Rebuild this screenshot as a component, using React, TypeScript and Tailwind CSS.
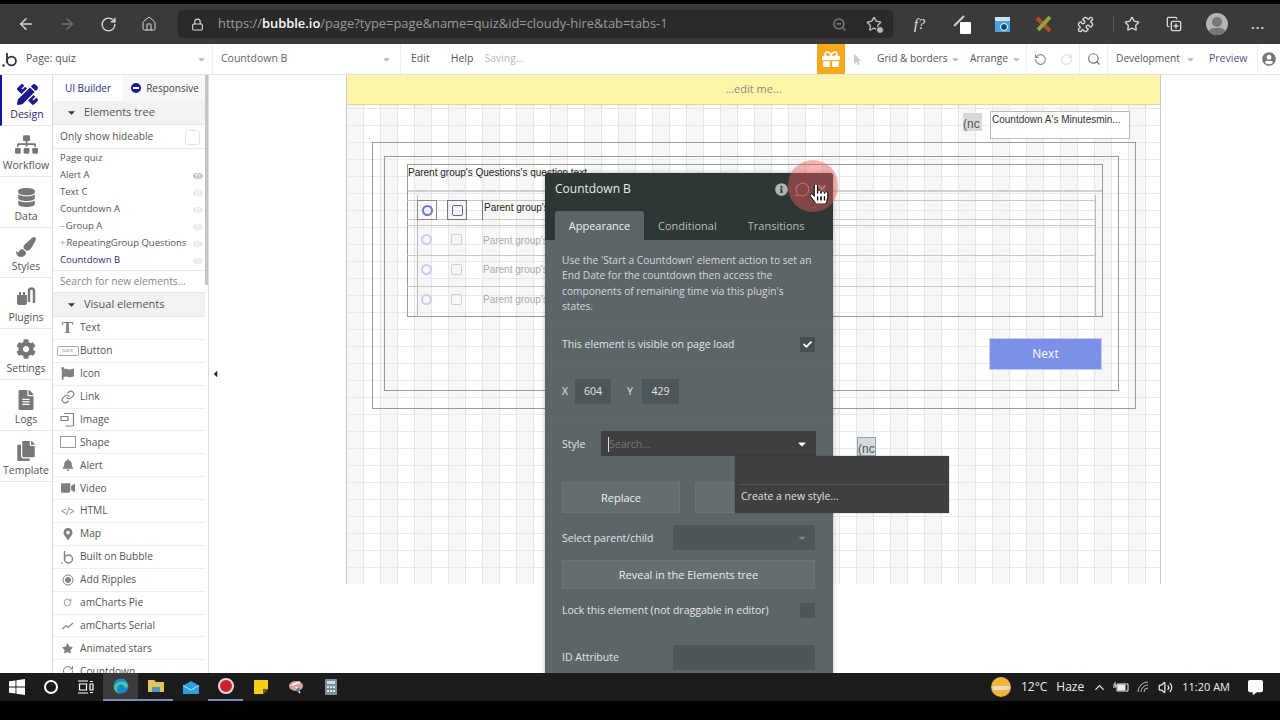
import { ArrowLeft, ArrowRight, RotateCw, RotateCcw, Home, Lock, ZoomOut, Star, Puzzle, CopyPlus, Search, ChevronUp, Volume2, MessageCircle, Link as LinkIcon } from "lucide-react";
import { FaPencilRuler, FaSitemap, FaDatabase, FaPaintBrush, FaCog, FaFileAlt, FaCopy, FaEye, FaBell, FaVideo, FaMapMarkerAlt, FaStar, FaInfoCircle, FaTimes, FaGift, FaUserCircle, FaMousePointer, FaHandPointer, FaCheck, FaCaretDown, FaFlag, FaCommentAlt } from "react-icons/fa";

const railItems = [
  { label: "Design", icon: <FaPencilRuler size={21} className="text-[#1a1a8c]" />, active: true },
  { label: "Workflow", icon: <FaSitemap size={23} className="text-[#777]" /> },
  { label: "Data", icon: <FaDatabase size={19} className="text-[#777]" /> },
  { label: "Styles", icon: <FaPaintBrush size={20} className="text-[#777]" /> },
  {
    label: "Plugins",
    icon: (
      <svg width="22" height="22" viewBox="0 0 22 22" className="text-[#777]">
        <path d="M2 9h10v8a2 2 0 0 1-2 2H4a2 2 0 0 1-2-2z M4 6h2v3H4z M8 6h2v3H8z" fill="currentColor" />
        <path d="M14 16V5a2.5 2.5 0 0 1 5 0v12" fill="none" stroke="currentColor" strokeWidth="2.4" />
      </svg>
    ),
  },
  { label: "Settings", icon: <FaCog size={20} className="text-[#777]" /> },
  { label: "Logs", icon: <FaFileAlt size={20} className="text-[#777]" /> },
  { label: "Template", icon: <FaCopy size={20} className="text-[#777]" /> },
];

const treeRows = [
  { name: "Page quiz" },
  { name: "Alert A", eye: "text-[#bbb]" },
  { name: "Text C", eye: "text-[#e6e6e6]" },
  { name: "Countdown A", eye: "text-[#e6e6e6]" },
  { name: "Group A", eye: "text-[#e6e6e6]", prefix: "–" },
  { name: "RepeatingGroup Questions", eye: "text-[#e6e6e6]", prefix: "+" },
  { name: "Countdown B", eye: "text-[#e6e6e6]", selected: true },
];

const glyph = "w-[25px] flex justify-center text-[#808080]";

const visualRows = [
  { name: "Text", icon: <span className="[font-family:'Liberation_Serif',serif] text-[17px] font-bold text-[#808080] leading-none">T</span> },
  { name: "Button", icon: <span className="w-[22px] h-[10px] border border-[#aaa] rounded-[2px] text-[4px] leading-[8px] text-center text-[#666]">CLICK</span> },
  { name: "Icon", icon: <FaFlag size={13} /> },
  { name: "Link", icon: <LinkIcon size={14} /> },
  {
    name: "Image",
    icon: (
      <svg width="15" height="15" viewBox="0 0 15 15" fill="none" stroke="currentColor" strokeWidth="1.2">
        <path d="M4 1.5h9.5v11a1.5 1.5 0 0 1-1.5 1.500H5.500" />
        <path d="M1 4.500h7v4H1z" />
      </svg>
    ),
  },
  { name: "Shape", icon: <span className="w-[16px] h-[12px] border border-[#999]" /> },
  { name: "Alert", icon: <FaBell size={12} /> },
  { name: "Video", icon: <FaVideo size={14} /> },
  { name: "HTML", icon: <span className="text-[10px] leading-none tracking-[-0.5px]">{"</>"}</span> },
  { name: "Map", icon: <FaMapMarkerAlt size={12} /> },
  {
    name: "Built on Bubble",
    icon: (
      <svg width="13" height="14" viewBox="0 0 13 14" fill="none" stroke="currentColor" strokeWidth="1.4">
        <path d="M3.500 1v8" />
        <circle cx="7.500" cy="9" r="4" />
        <circle cx="1" cy="13" r=".8" fill="currentColor" stroke="none" />
      </svg>
    ),
  },
  {
    name: "Add Ripples",
    icon: (
      <svg width="12" height="12" viewBox="0 0 12 12" fill="none" stroke="currentColor">
        <circle cx="6" cy="6" r="5" />
        <circle cx="6" cy="6" r="2.500" fill="currentColor" />
      </svg>
    ),
  },
  { name: "amCharts Pie", icon: <RotateCw size={9} /> },
  {
    name: "amCharts Serial",
    icon: (
      <svg width="12" height="8" viewBox="0 0 12 8" fill="none" stroke="currentColor" strokeWidth="1.2">
        <path d="M0.500 7 4 3.500l2 2L11 1" />
      </svg>
    ),
  },
  { name: "Animated stars", icon: <FaStar size={11} /> },
  { name: "Countdown", icon: <RotateCw size={12} /> },
];

function Caret({ className }: { className: string }) {
  return <FaCaretDown size={11} className={className} />;
}

function Rail() {
  return (
    <div className="w-[52px] shrink-0 flex flex-col bg-white">
      {railItems.map((item) => (
        <div
          key={item.label}
          className={`h-[50.85px] shrink-0 flex flex-col items-center justify-end pb-[4px] gap-[3px] border-b border-[#e8e8e8] ${item.active ? "border-l-2 border-l-[#1212a8]" : ""}`}
        >
          {item.icon}
          <span className={`text-[10.5px] leading-[13px] ${item.active ? "text-[#2a2a6e]" : "text-[#555]"}`}>{item.label}</span>
        </div>
      ))}
    </div>
  );
}

function SectionHeader({ title }: { title: string }) {
  return (
    <div className="h-[24px] shrink-0 flex items-center bg-[#f2f2f2] pl-[13px] gap-[7px] text-[11px] text-[#555] border-b border-[#e6e6e6]">
      <FaCaretDown size={11} className="text-[#333]" />
      {title}
    </div>
  );
}

function ElementsPanel() {
  return (
    <div className="w-[157px] shrink-0 flex border-x border-[#dcdcdc] h-[598px] overflow-hidden">
      <div className="w-[152px] shrink-0 flex flex-col text-[#555]">
        <div className="h-[26px] shrink-0 flex text-[10px]">
          <div className="w-[70px] flex items-center justify-center text-[#2d2d86] bg-white">UI Builder</div>
          <div className="flex-1 flex items-center justify-center gap-[5px] pl-[2px] bg-[#f7f7f7] text-[#444]">
            <span className="w-[10px] h-[10px] rounded-full bg-[#1a1a8c] flex items-center justify-center">
              <span className="w-[6px] h-[2px] bg-white" />
            </span>
            Responsive
          </div>
        </div>
        <SectionHeader title="Elements tree" />
        <div className="h-[24px] shrink-0 flex items-center justify-between pl-[7px] pr-[5px] pt-[1px] text-[10.2px] border-b border-[#e8e8e8]">
          Only show hideable
          <span className="w-[15px] h-[15px] border border-[#e4e4e4] rounded-[3px]" />
        </div>
        <div className="h-[122px] shrink-0 pt-[1px] pl-[7px] pr-[2px] border-b border-[#e8e8e8]">
          {treeRows.map((row) => (
            <div key={row.name} className="h-[17px] flex items-center justify-between text-[9.5px]">
              <span className={`flex items-center gap-[1px] ${row.selected ? "text-[#2d2d86]" : ""}`}>
                {row.prefix && <span className="text-[#999]">{row.prefix}</span>}
                {row.name}
              </span>
              {row.eye && <FaEye size={10} className={row.eye} />}
            </div>
          ))}
        </div>
        <div className="h-[22px] shrink-0 flex items-center pl-[7px] pt-[1px] text-[10.2px] text-[#888] border-b border-[#e8e8e8]">Search for new elements...</div>
        <SectionHeader title="Visual elements" />
        {visualRows.map((row) => (
          <div key={row.name} className="h-[22.9px] shrink-0 flex items-center pl-[2px] text-[10.2px] border-b border-[#eee]">
            <span className={glyph}>{row.icon}</span>
            {row.name}
          </div>
        ))}
      </div>
      <div className="w-[4px] h-[210px] bg-[#c4c4c4]" />
    </div>
  );
}

function EditorHeader() {
  return (
    <div className="h-[31px] shrink-0 flex items-center bg-white border-b border-[#e4e4e4] text-[10.5px] text-[#555]">
      <div className="w-[213px] shrink-0 h-full flex items-center border-r border-[#eee]">
        <svg width="16" height="18" viewBox="0 0 16 18" fill="none" stroke="#333" strokeWidth="1.8" className="ml-[1px]">
          <path d="M6 3v10" />
          <circle cx="10.500" cy="11" r="4.400" />
          <circle cx="2.500" cy="15.500" r="1.200" fill="#333" stroke="none" />
        </svg>
        <span className="ml-[9px] flex-1">Page: quiz</span>
        <Caret className="mr-[5px] text-[#bbb]" />
      </div>
      <div className="w-[188px] shrink-0 h-full flex items-center justify-between pl-[8px] pr-[8px] border-r border-[#eee]">
        <span className="text-[#666]">Countdown B</span>
        <Caret className="text-[#bbb]" />
      </div>
      <span className="ml-[10px]">Edit</span>
      <span className="ml-[21px]">Help</span>
      <span className="ml-[11px] text-[#bbb]">Saving...</span>
      <div className="ml-auto w-[28px] h-full flex items-center justify-center bg-[#f5a81c]">
        <FaGift size={18} className="text-white" />
      </div>
      <FaMousePointer size={11} className="ml-[7px] text-[#ccc]" />
      <span className="ml-[14px] w-[70px] whitespace-nowrap text-[10.2px]">Grid &amp; borders</span>
      <Caret className="ml-[3px] text-[#bbb]" />
      <span className="ml-[9px] w-[38px] text-[10.2px]">Arrange</span>
      <Caret className="ml-[3px] text-[#bbb]" />
      <div className="ml-[4px] h-full w-[54px] flex items-center justify-around border-x border-[#eee]">
        <RotateCcw size={13} className="text-[#888]" />
        <RotateCw size={13} className="text-[#ddd]" />
      </div>
      <div className="h-full w-[28px] flex items-center justify-center border-r border-[#eee]">
        <Search size={14} className="text-[#777]" />
      </div>
      <span className="ml-[8px] w-[64px] whitespace-nowrap text-[10.2px]">Development</span>
      <Caret className="ml-[5px] text-[#bbb]" />
      <span className="ml-[13px] w-[38px] text-[#50508a]">Preview</span>
      <div className="ml-[10px] h-full w-[23px] flex items-center justify-center border-l border-[#eee]">
        <FaUserCircle size={14} className="text-[#777]" />
      </div>
    </div>
  );
}

function Canvas() {
  const line = "absolute border border-[#9a9a9a]";
  const row = "absolute left-[60px] w-[688px] border-t border-[#c8c8c8]";
  const faded = "absolute text-[10px] text-[#aaa] [font-family:'Liberation_Sans',sans-serif]";
  return (
    <div className="w-[815px] shrink-0 flex flex-col h-[509px] border-x border-[#c9c9c9]">
      <div className="h-[30px] shrink-0 flex items-center justify-center bg-[#fdf6a9] text-[11px] text-[#888] border-b border-[#dfd98f]">...edit me...</div>
      <div className="relative flex-1 bg-white bg-[linear-gradient(to_right,#e6e6e6_1px,transparent_1px),linear-gradient(to_bottom,#e9e9e9_1px,transparent_1px),linear-gradient(to_right,#f7f7f7_17px,transparent_17px)] bg-[size:17px_17px,17px_17px,34px_100%] bg-[position:-1px_3px,-1px_3px,-1px_0]">
        <span className="absolute left-[616px] top-[8px] w-[19px] h-[18px] bg-[#d8d8d8] overflow-hidden text-[12px] leading-[22px] text-[#555] [font-family:'Liberation_Sans',sans-serif]">(nc</span>
        <div className="absolute left-[643px] top-[6px] w-[140px] h-[28px] border border-[#bbb] bg-white pl-[1px] text-[10px] leading-[15px] text-[#333] [font-family:'Liberation_Sans',sans-serif]">Countdown A's Minutesmin...</div>

        <div className={`${line} left-[25px] top-[37px] w-[764px] h-[267px]`} />
        <div className={`${line} left-[37px] top-[51px] w-[735px] h-[235px]`} />
        <div className={`${line} left-[60px] top-[59px] w-[696px] h-[153px]`}>
          <span className="absolute left-[0px] top-[0px] text-[10px] leading-[16px] text-[#222] [font-family:'Liberation_Sans',sans-serif]">Parent group's Questions's question text</span>
        </div>
        <div className="absolute left-[61px] top-[85px] w-[694px] border-t-2 border-[#d0d0d0]" />
        <div className="absolute left-[70px] top-[90px] w-[679px] h-[122px] border-x border-[#bbb]" />
        <div className={`${row} top-[95px] border-[#aaa]`} />
        <div className={`${row} top-[114px] border-[#aaa]`} />
        <div className={`${row} top-[120px]`} />
        <div className={`${row} top-[150px]`} />
        <div className={`${row} top-[181px]`} />

        <div className="absolute left-[70px] top-[95px] w-[20px] h-[20px] border border-[#888] flex items-center justify-center">
          <span className="w-[11px] h-[11px] rounded-full border-2 border-[#6c78c4]" />
        </div>
        <div className="absolute left-[100px] top-[95px] w-[20px] h-[20px] border border-[#777] flex items-center justify-center">
          <span className="w-[11px] h-[11px] rounded-[2px] border border-[#5a66b0]" />
        </div>
        <div className="absolute left-[135px] top-[95px] h-[20px] border-l border-[#777] pl-[1px] text-[10px] leading-[15px] text-[#222] [font-family:'Liberation_Sans',sans-serif]">Parent group's</div>

        <span className="absolute left-[74px] top-[129px] w-[11px] h-[11px] rounded-full border-2 border-[#c9cdea]" />
        <span className="absolute left-[104px] top-[129px] w-[11px] h-[11px] rounded-[2px] border border-[#cfcfcf]" />
        <span className={`${faded} left-[136px] top-[128px]`}>Parent group's</span>
        <span className="absolute left-[74px] top-[159px] w-[11px] h-[11px] rounded-full border-2 border-[#c9cdea]" />
        <span className="absolute left-[104px] top-[159px] w-[11px] h-[11px] rounded-[2px] border border-[#cfcfcf]" />
        <span className={`${faded} left-[136px] top-[157px]`}>Parent group's</span>
        <span className="absolute left-[74px] top-[189px] w-[11px] h-[11px] rounded-full border-2 border-[#c9cdea]" />
        <span className="absolute left-[104px] top-[189px] w-[11px] h-[11px] rounded-[2px] border border-[#cfcfcf]" />
        <span className={`${faded} left-[136px] top-[187px]`}>Parent group's</span>

        <div className="absolute left-[642px] top-[233px] w-[113px] h-[32px] bg-[#7b90e6] flex items-center justify-center text-[12px] text-white border border-[#c5cdf0]">Next</div>
        <span className="absolute left-[510px] top-[332px] w-[19px] h-[19px] bg-[#d8d8d8] border border-[#7fa8c4] overflow-hidden text-[12px] leading-[22px] text-[#555] [font-family:'Liberation_Sans',sans-serif]">(nc</span>
      </div>
    </div>
  );
}

function PropertyPanel() {
  const inputBox = "bg-[#4d5659]";
  const button = "bg-[#646e70] border border-[#6c7678] flex items-center justify-center pt-[1px] text-[#eceeee]";
  return (
    <div className="absolute left-[545px] top-[129px] w-[288px] h-[544px] flex flex-col bg-[#5c6568] rounded-t-[3px] text-[10.5px] text-[#e3e6e6] shadow-[0_0_4px_rgba(0,0,0,0.3)]">
      <div className="h-[32px] shrink-0 flex items-center bg-[#2e3636] rounded-t-[3px] pl-[10px] pr-[5px] text-[12px] text-[#e8e8e8]">
        Countdown B
        <FaInfoCircle size={13} className="ml-auto text-[#aeb4b4]" />
        <MessageCircle size={15} className="ml-[7px] text-[#8f7777]" />
        <FaTimes size={12} className="ml-[6px] text-[#8a8a8a]" />
      </div>
      <div className="h-[35px] shrink-0 flex items-end bg-[#2e3636] pl-[10px] text-[11px]">
        <div className="w-[89px] h-[29px] flex items-center justify-center pt-[1px] bg-[#5c6568] rounded-t-[3px] text-[#f2f2f2]">Appearance</div>
        <div className="ml-[14px] h-[29px] flex items-center pt-[1px] text-[#b8bdbd]">Conditional</div>
        <div className="ml-[31px] h-[29px] flex items-center pt-[1px] text-[#b8bdbd]">Transitions</div>
      </div>
      <div className="h-[86px] shrink-0 pt-[13px] pl-[17px] pr-[19px] text-[10.2px] leading-[15.4px] text-[#d5d9da] border-b border-[#5f686b]">
        Use the 'Start a Countdown' element action to set an End Date for the countdown then access the components of remaining time via this plugin's states.
      </div>
      <div className="h-[40px] shrink-0 flex items-center justify-between pl-[17px] pr-[18px] pb-[2px] border-b border-[#5f686b]">
        This element is visible on page load
        <span className="w-[15px] h-[15px] flex items-center justify-center bg-[#474f51]">
          <FaCheck size={9} className="text-white" />
        </span>
      </div>
      <div className="h-[52px] shrink-0 flex items-center pl-[17px] border-b border-[#5f686b]">
        X
        <span className={`${inputBox} ml-[7px] w-[36px] h-[25px] flex items-center justify-center pt-[1px]`}>604</span>
        <span className="ml-[16px]">Y</span>
        <span className={`${inputBox} ml-[9px] w-[37px] h-[25px] flex items-center justify-center pt-[1px]`}>429</span>
      </div>
      <div className="mt-[13px] shrink-0 flex items-center pl-[17px] pr-[17px]">
        <span className="w-[39px] mt-[2px]">Style</span>
        <div className="w-[215px] h-[25px] flex items-center justify-between bg-[#3f3f3f] pl-[7px] pr-[8px] text-[#777]">
          <span className="border-l border-[#ddd] mt-[2px]">Search...</span>
          <FaCaretDown size={12} className="text-white" />
        </div>
      </div>
      <div className="mt-[26px] shrink-0 flex gap-[15px] pl-[17px] pr-[17px]">
        <div className={`${button} w-[118px] h-[31px] text-[11px]`}>Replace</div>
        <div className={`${button} flex-1 h-[31px]`} />
      </div>
      <div className="mt-[12px] shrink-0 flex items-center justify-between pl-[17px] pr-[18px]">
        <span className="mt-[2px]">Select parent/child</span>
        <div className={`${inputBox} w-[142px] h-[25px] flex items-center justify-end pr-[8px]`}>
          <FaCaretDown size={10} className="text-[#7c8587]" />
        </div>
      </div>
      <div className="mt-[10px] shrink-0 px-[17px]">
        <div className={`${button} w-[253px] h-[29px] text-[11px]`}>Reveal in the Elements tree</div>
      </div>
      <div className="mt-[14px] shrink-0 flex items-center justify-between pl-[17px] pr-[18px] h-[15px]">
        Lock this element (not draggable in editor)
        <span className={`${inputBox} w-[15px] h-[15px]`} />
      </div>
      <div className="mt-[27px] shrink-0 flex items-center justify-between pl-[17px] pr-[18px]">
        ID Attribute
        <div className={`${inputBox} w-[142px] h-[25px]`} />
      </div>

      <div className="absolute left-[190px] top-[283px] w-[214px] h-[57px] flex flex-col justify-end bg-[#3f3f3f] px-[2px] text-[#e0e0e0] shadow-[0_0_1px_rgba(0,0,0,0.5)]">
        <div className="h-[29px] mx-[1px] border-t border-[#555] pl-[3px] pt-[4px]">Create a new style...</div>
      </div>

      <div className="absolute left-[243px] top-[-13px] w-[50px] h-[52px] rounded-full bg-[#e85a5a]/45" />
      <FaHandPointer size={20} className="absolute left-[264px] top-[11px] text-white stroke-black stroke-[24px]" />
    </div>
  );
}

function Taskbar() {
  const slot = "w-[35px] h-full flex items-center justify-center";
  const running = "border-b-2 border-[#6d93b5]";
  return (
    <div className="h-[28px] shrink-0 flex items-center bg-[#1c1c1c] text-[12px] text-[#eee] [font-family:'Open_Sans',sans-serif]">
      <div className="w-[33px] h-full flex items-center justify-center">
        <svg width="16" height="16" viewBox="0 0 16 16" fill="#fff">
          <path d="M0 2.300 6.500 1.400v6.200H0zM7.400 1.300 16 0v7.600H7.400zM0 8.400h6.500v6.200L0 13.700zM7.400 8.400H16V16l-8.600-1.300z" />
        </svg>
      </div>
      <div className={slot}>
        <span className="w-[14px] h-[14px] rounded-full border-2 border-white" />
      </div>
      <div className={slot}>
        <svg width="16" height="14" viewBox="0 0 16 14" fill="none" stroke="#fff" strokeWidth="1.2">
          <path d="M0 1h10M0 13h10M1.500 4h7v6h-7zM12 1.500h3M12 4h3v6h-3zM12 12.500h3" />
        </svg>
      </div>
      <div className={`${slot} bg-[#3b3b3b] ${running}`}>
        <svg width="16" height="16" viewBox="0 0 16 16">
          <circle cx="8" cy="8" r="7.500" fill="#1b86c9" />
          <path d="M1 9C2 3 13 1 15 8c0 2-3 2-4 1 0-3-6-4-7 1s2 5 5 5.500C5 16 1 14 1 9z" fill="#46c5a6" />
        </svg>
      </div>
      <div className={`${slot} ${running}`}>
        <svg width="16" height="14" viewBox="0 0 16 14">
          <path d="M0 1h6l2 2h8v10H0z" fill="#e6c25a" />
          <path d="M4 8h8v5H4z" fill="#4a97c4" />
        </svg>
      </div>
      <div className={slot}>
        <svg width="16" height="13" viewBox="0 0 16 13">
          <path d="M0 4.500 8 0l8 4.500V13H0z" fill="#2f9fdc" />
          <path d="M0 4.500 8 9l8-4.500" fill="none" stroke="#bfe4f7" />
        </svg>
      </div>
      <div className={`${slot} ${running}`}>
        <span className="w-[16px] h-[16px] rounded-full bg-[#d21f2c] border-2 border-[#ddd]" />
      </div>
      <div className={slot}>
        <svg width="14" height="14" viewBox="0 0 14 14">
          <path d="M0 0h14v9l-5 5H0z" fill="#f5cf17" />
          <path d="M9 14V9h5z" fill="#6a5a10" />
        </svg>
      </div>
      <div className={slot}>
        <svg width="16" height="14" viewBox="0 0 16 14">
          <ellipse cx="8" cy="6" rx="7" ry="5" fill="#d9a0a5" />
          <path d="M4 5l8-3M8 7l4 6" stroke="#fff" strokeWidth="1.500" />
          <circle cx="10" cy="10" r="2" fill="#4d7fa0" />
        </svg>
      </div>
      <div className={slot}>
        <svg width="12" height="16" viewBox="0 0 12 16">
          <rect width="12" height="16" rx="1" fill="#7b8f9c" />
          <rect x="2" y="2" width="8" height="3" fill="#cfdbe2" />
          <path d="M2 7h2v2H2zM5 7h2v2H5zM8 7h2v2H8zM2 11h2v2H2zM5 11h2v2H5zM8 11h2v2H8z" fill="#dfe7ec" />
        </svg>
      </div>

      <div className="ml-auto flex items-center">
        <span className="relative w-[20px] h-[20px] rounded-full bg-[#eeb43b] overflow-hidden">
          <span className="absolute left-[1px] top-[9px] w-[18px] h-[4px] rounded-full bg-[#e9dcb8]" />
        </span>
        <span className="ml-[10px]">12°C</span>
        <span className="ml-[9px]">Haze</span>
        <ChevronUp size={15} className="ml-[8px]" />
        <svg width="16" height="11" viewBox="0 0 16 11" fill="none" stroke="#eee" className="ml-[6px]">
          <path d="M4 2h11v7H4z" />
          <path d="M5 3h7v5H5z" fill="#eee" />
          <path d="M2 0v3M0 3h3v2H0" />
        </svg>
        <svg width="14" height="12" viewBox="0 0 14 12" fill="none" stroke="#bbb" className="ml-[8px]">
          <path d="M1 11A10 10 0 0 1 11 1M4 11A7 7 0 0 1 11 4M7 11a4 4 0 0 1 4-4" />
        </svg>
        <Volume2 size={15} className="ml-[7px]" />
        <span className="ml-[9px] text-[11px]">11:20 AM</span>
        <div className="w-[50px] flex justify-center">
          <FaCommentAlt size={15} className="text-white" />
        </div>
      </div>
    </div>
  );
}

function BrowserBar() {
  const icon = "text-[#d8d8d8]";
  return (
    <div className="h-[40px] shrink-0 flex items-center bg-[#3a3a3a]">
      <div className="w-[178px] shrink-0 flex items-center">
        <ArrowLeft size={18} className={`${icon} ml-[17px]`} />
        <ArrowRight size={18} className="ml-[23px] text-[#707070]" />
        <RotateCw size={17} className={`${icon} ml-[24px]`} />
        <Home size={16} strokeWidth={1.5} className={`${icon} ml-[24px]`} />
      </div>
      <div className="w-[715px] h-[28px] shrink-0 flex items-center bg-[#2a2a2a] rounded-[4px] pl-[13px] pr-[11px] text-[12.9px] text-[#9b9b9b]">
        <Lock size={13} className="text-[#d8d8d8]" />
        <span className="ml-[14px]">
          https://<span className="font-semibold text-white">bubble.io</span>/page?type=page&amp;name=quiz&amp;id=cloudy-hire&amp;tab=tabs-1
        </span>
        <ZoomOut size={15} className="ml-auto text-[#888]" />
        <span className="relative ml-[19px]">
          <Star size={16} className="text-[#bbb]" />
          <span className="absolute -right-[2px] -bottom-[2px] w-[8px] h-[8px] rounded-full bg-[#bbb] border border-[#2a2a2a]" />
        </span>
      </div>
      <span className="ml-[21px] w-[14px] text-[14px] italic text-[#eee] [font-family:'Liberation_Serif',serif]">f?</span>
      <span className="ml-[23px] relative w-[20px] h-[20px]">
        <span className="absolute right-0 bottom-0 w-[11px] h-[12px] rounded-[1px] bg-white" />
        <span className="absolute left-[1px] top-[6px] w-[14px] h-[2px] -rotate-45 bg-[#cfcfcf]" />
      </span>
      <span className="ml-[24px] relative w-[15px] h-[15px] bg-[#4aa3df]">
        <span className="absolute left-0 top-0 w-[15px] h-[4px] bg-white/70" />
        <span className="absolute left-[5px] top-[6px] w-[8px] h-[8px] rounded-full bg-[#114a78] border border-white" />
      </span>
      <svg width="18" height="18" viewBox="0 0 18 18" className="ml-[25px]">
        <path d="M2 3 15 16" stroke="#b04a2a" strokeWidth="4" />
        <path d="M15 2 3 15" stroke="#8ea83a" strokeWidth="4" />
      </svg>
      <Puzzle size={17} className={`${icon} ml-[24px]`} />
      <span className="ml-[19px] w-px h-[16px] bg-[#5a5a5a]" />
      <Star size={16} className={`${icon} ml-[10px]`} />
      <CopyPlus size={16} className={`${icon} ml-[26px]`} />
      <span className="ml-[24px] w-[22px] h-[22px] rounded-full bg-[#b3b3b3] relative overflow-hidden">
        <span className="absolute left-[6px] top-[4px] w-[10px] h-[10px] rounded-full bg-[#777]" />
        <span className="absolute left-[2px] top-[15px] w-[18px] h-[12px] rounded-full bg-[#777]" />
      </span>
      <span className="ml-[23px] text-[13px] font-bold tracking-[1px] text-[#ddd] leading-none">...</span>
    </div>
  );
}

export default function App() {
  return (
    <div className="w-[1280px] h-[720px] overflow-hidden flex flex-col bg-black [font-family:'Open_Sans',sans-serif]">
      <div className="h-[4px] shrink-0" />
      <BrowserBar />
      <div className="relative h-[629px] shrink-0 flex flex-col bg-white overflow-hidden">
        <EditorHeader />
        <div className="flex-1 flex items-start">
          <Rail />
          <ElementsPanel />
          <div className="relative w-[137px] shrink-0 h-full">
            <FaCaretDown size={10} className="absolute left-[2px] top-[294px] rotate-90 text-[#222]" />
          </div>
          <Canvas />
        </div>
        <PropertyPanel />
      </div>
      <Taskbar />
    </div>
  );
}
